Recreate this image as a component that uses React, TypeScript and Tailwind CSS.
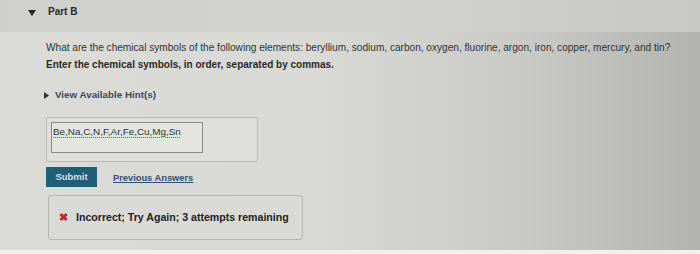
export default function App() {
  return (
    <div
      className="w-[700px] h-[254px] overflow-hidden flex flex-col text-[#2a2a2a] bg-[linear-gradient(90deg,#dadad6_0%,#d9d9d5_45%,#c9cac5_75%,#b3b4af_100%)]"
      style={{ fontFamily: '"Liberation Sans", Arial, sans-serif' }}
    >
      {/* part header */}
      <div className="h-[32px] shrink-0 flex items-center pl-[28px] gap-[12px] bg-[linear-gradient(90deg,#cfcfcc_0%,#d3d3d0_50%,#c8c9c5_100%)]">
        <svg width="8" height="6" viewBox="0 0 8 6" className="mt-[-6px]">
          <polygon points="0,0 8,0 4,6" fill="#222" />
        </svg>
        <span className="text-[10px] font-bold mt-[-10px]">Part B</span>
      </div>

      <div className="flex-1 flex flex-col pl-[46px] pt-[10px]">
        <p className="text-[10.1px] leading-[12px] text-[#333] whitespace-nowrap">
          What are the chemical symbols of the following elements: beryllium, sodium, carbon, oxygen, fluorine, argon, iron, copper, mercury, and tin?
        </p>
        <p className="text-[10px] leading-[12px] font-bold mt-[5px] text-[#2a2a2a]">
          Enter the chemical symbols, in order, separated by commas.
        </p>

        <div className="flex items-center gap-[6px] mt-[18px] ml-[-2px] h-[12px]">
          <svg width="5" height="7" viewBox="0 0 5 7">
            <polygon points="0,0 5,3.5 0,7" fill="#333" />
          </svg>
          <span className="text-[9.8px] font-bold text-[#3b4a5c]">View Available Hint(s)</span>
        </div>

        <div className="mt-[16px] w-[212px] h-[45px] border border-[#b9b9b5] rounded-[2px] bg-[#dededa] p-[4px]">
          <div className="w-[152px] h-[31px] border border-[#8a8a86] bg-[#e4e4e0] px-[1px] pt-[1px] leading-[12px]">
            <span className="text-[9.9px] leading-[12px] text-[#333] underline decoration-dotted decoration-[#d33] underline-offset-2">
              Be,Na,C,N,F,Ar,Fe,Cu,Mg,Sn
            </span>
          </div>
        </div>

        <div className="flex items-center gap-[16px] mt-[5px]">
          <div className="w-[51px] h-[20px] bg-[#1f5f78] flex items-center justify-center">
            <span className="text-[9.5px] font-bold text-[#cfe0e6]">Submit</span>
          </div>
          <span className="text-[9.3px] font-bold text-[#34506c] underline mt-[4px]">Previous Answers</span>
        </div>

        <div className="mt-[8px] ml-[2px] w-[255px] h-[45px] border border-[#b5b5b1] rounded-[3px] bg-[#d9d9d5] flex items-center pl-[10px] gap-[8px]">
          <span className="text-[11px] font-bold text-[#c0262c] leading-none">✖</span>
          <span className="text-[10.6px] font-bold text-[#222]">Incorrect; Try Again; 3 attempts remaining</span>
        </div>
      </div>
      <div className="h-[4px] shrink-0 bg-[#f0f0ee]" />
    </div>
  );
}
